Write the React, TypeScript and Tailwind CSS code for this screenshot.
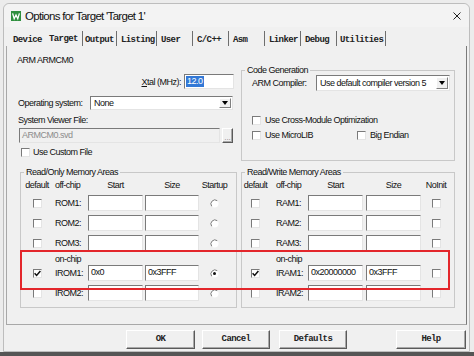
import React from "react";

const SANS = "font-['Liberation_Sans',Arial,sans-serif]";
const MONO = "font-['Liberation_Mono','DejaVu_Sans_Mono',monospace]";
const SUNKEN =
  "border-t border-l border-b border-r border-t-[#7a7a7a] border-l-[#7a7a7a] border-b-[#e4e4e4] border-r-[#e4e4e4]";
const RAISED =
  "border-t border-l border-b border-r border-t-white border-l-white border-b-[#5a5a5a] border-r-[#5a5a5a] shadow-[inset_-1px_-1px_0_#a8a8a8]";

function Check({ checked = false }: { checked?: boolean }) {
  return (
    <div className={`w-[9px] h-[9px] shrink-0 bg-white ${SUNKEN} flex items-center justify-center`}>
      {checked && (
        <svg width="7" height="7" viewBox="0 0 7 7">
          <path d="M0.6 3.2 L2.6 5.4 L6.4 0.9" fill="none" stroke="#111" strokeWidth="1.5" />
        </svg>
      )}
    </div>
  );
}

function Radio({ checked = false }: { checked?: boolean }) {
  return (
    <svg width="9" height="9" viewBox="0 0 9 9">
      <circle cx="4.5" cy="4.5" r="4" fill="#fff" />
      <path d="M1.7 7.3 A4 4 0 0 1 7.3 1.7" fill="none" stroke="#7a7a7a" strokeWidth="1" />
      {checked && <circle cx="4.5" cy="4.5" r="1.5" fill="#111" />}
    </svg>
  );
}

function Field({ value = "", className = "" }: { value?: string; className?: string }) {
  return (
    <div className={`bg-white ${SUNKEN} pl-[2px] pt-[1px] text-[9px] leading-[10px] text-[#111] ${className}`}>
      {value}
    </div>
  );
}

function Select({ value, className = "" }: { value: string; className?: string }) {
  return (
    <div className={`flex items-stretch bg-white ${SUNKEN} ${className}`}>
      <div className="flex-1 pl-[3px] flex items-center text-[9px] leading-[10px] text-[#111] overflow-hidden">{value}</div>
      <div className="w-[12px] m-[1px] bg-[#f0f0f0] border-t border-l border-b border-r border-t-white border-l-white border-b-[#808080] border-r-[#808080] flex items-center justify-center">
        <div className="w-0 h-0 border-l-[3px] border-r-[3px] border-t-[4px] border-l-transparent border-r-transparent border-t-black" />
      </div>
    </div>
  );
}

function Group({
  label,
  className = "",
  children,
}: {
  label: string;
  className?: string;
  children?: React.ReactNode;
}) {
  return (
    <div className={`relative border border-[#c8c8c8] ${className}`}>
      <span className="absolute -top-[6px] left-[3px] px-[2px] bg-[#f0f0f0] text-[9px] leading-[10px] text-[#111] whitespace-nowrap">
        {label}
      </span>
      {children}
    </div>
  );
}

function RomRow({
  label,
  start = "",
  size = "",
  checked = false,
  radio = false,
}: {
  label: string;
  start?: string;
  size?: string;
  checked?: boolean;
  radio?: boolean;
}) {
  return (
    <div className="flex h-[16px] items-center">
      <div className="w-[32px] flex justify-center">
        <Check checked={checked} />
      </div>
      <div className="w-[35px] pl-[2px] text-[9px] leading-[10px]">{label}</div>
      <Field value={start} className="w-[55px] h-[16px]" />
      <Field value={size} className="w-[54px] h-[16px] ml-[2px]" />
      <div className="w-[31px] flex justify-center">
        <Radio checked={radio} />
      </div>
    </div>
  );
}

function RamRow({
  label,
  start = "",
  size = "",
  checked = false,
}: {
  label: string;
  start?: string;
  size?: string;
  checked?: boolean;
}) {
  return (
    <div className="flex h-[16px] items-center">
      <div className="w-[27px] flex justify-center">
        <Check checked={checked} />
      </div>
      <div className="w-[39px] pl-[7px] text-[9px] leading-[10px]">{label}</div>
      <Field value={start} className="w-[55px] h-[16px]" />
      <Field value={size} className="w-[55px] h-[16px] ml-[3px]" />
      <div className="w-[30px] flex justify-center">
        <Check />
      </div>
    </div>
  );
}

const tabs: { name: string; cls: string }[] = [
  { name: "Device", cls: "w-[37px] pl-[4px] pt-[4px]" },
  { name: "Target", cls: "w-[37px] pl-[3px] pt-[2px] border-r border-r-[#6e6e6e]" },
  { name: "Output", cls: "w-[34px] pl-[2px] pt-[4px] border-r border-r-[#6e6e6e]" },
  { name: "Listing", cls: "w-[40px] pl-[4px] pt-[4px] border-r border-r-[#6e6e6e]" },
  { name: "User", cls: "w-[36px] pl-[4px] pt-[4px] border-r border-r-[#6e6e6e]" },
  { name: "C/C++", cls: "w-[36px] pl-[4px] pt-[4px] border-r border-r-[#6e6e6e]" },
  { name: "Asm", cls: "w-[36px] pl-[4px] pt-[4px] border-r border-r-[#6e6e6e]" },
  { name: "Linker", cls: "w-[36px] pl-[4px] pt-[4px] border-r border-r-[#6e6e6e]" },
  { name: "Debug", cls: "w-[36px] pl-[4px] pt-[4px] border-r border-r-[#6e6e6e]" },
  { name: "Utilities", cls: "w-[49px] pl-[3px] pt-[4px] border-r border-r-[#6e6e6e]" },
];

export default function App() {
  return (
    <div
      className={`relative w-[474px] h-[356px] overflow-hidden bg-[#ececec] flex flex-col ${SANS} text-[#111] tracking-[-0.5px] whitespace-nowrap`}
    >
      <div className="mt-[3px] ml-[3px] w-[467px] h-[349px] rounded-t-[6px] border border-[#bdbdbd] bg-[#f0f0f0] flex flex-col">
        {/* title bar */}
        <div className="h-[23px] flex items-center pl-[7px] pr-[8px] bg-[#f3f3f3] rounded-t-[6px]">
          <svg width="10" height="10" viewBox="0 0 10 10" className="shrink-0">
            <rect x="0" y="0" width="10" height="10" fill="#2f8f3e" />
            <path d="M1.6 2.4 L3.2 7.8 L5 4 L6.8 7.8 L8.4 2.4" fill="none" stroke="#fff" strokeWidth="1.3" />
          </svg>
          <span className="ml-[4px] text-[11.5px] leading-[12px] tracking-[-0.7px] text-[#111]">
            Options for Target 'Target 1'
          </span>
          <div className="flex-1" />
          <svg width="8" height="8" viewBox="0 0 8 8">
            <path d="M0.5 0.5 L7.5 7.5 M7.5 0.5 L0.5 7.5" stroke="#222" strokeWidth="1" />
          </svg>
        </div>
        {/* tabs */}
        <div
          className={`mt-[4px] h-[15px] flex items-stretch pl-[5px] ${MONO} text-[9px] font-bold tracking-[-0.6px] text-[#222]`}
        >
          {tabs.map((t) => (
            <div key={t.name} className={`flex items-center whitespace-nowrap ${t.cls}`}>
              {t.name}
            </div>
          ))}
        </div>
        {/* panel */}
        <div className="ml-[2px] w-[461px] h-[279px] border-l border-r border-b border-l-[#a8a8a8] border-r-[#7a7a7a] border-b-[#a8a8a8] flex flex-col pt-[9px]">
          <div className="flex items-start pl-[10px]">
            {/* left column */}
            <div className="w-[220px] flex flex-col text-[9px] leading-[10px]">
              <div className="h-[10px]">ARM ARMCM0</div>
              <div className="mt-[9px] h-[15px] flex items-center justify-end pr-[3px]">
                <span>
                  <span className="underline">X</span>tal (MHz):
                </span>
                <div className={`ml-[3px] w-[50px] h-[15px] bg-white ${SUNKEN} flex items-center pl-[1px]`}>
                  <span className="bg-[#3278d6] text-white leading-[11px] px-[1px]">12.0</span>
                </div>
              </div>
              <div className="mt-[7px] h-[14px] flex items-center">
                <div className="w-[73px] pl-[1px]">Operating system:</div>
                <Select value="None" className="w-[143px] h-[14px]" />
              </div>
              <div className="mt-[5px] h-[10px] pl-[1px]">System Viewer File:</div>
              <div className="mt-[3px] h-[15px] flex">
                <div
                  className={`ml-[2px] w-[201px] h-[15px] bg-[#f0f0f0] ${SUNKEN} pl-[2px] leading-[13px] text-[#8c8c8c]`}
                >
                  ARMCM0.svd
                </div>
                <div
                  className={`ml-[2px] w-[11px] h-[15px] bg-[#f0f0f0] ${RAISED} flex items-end justify-center text-[8px] leading-[9px] tracking-[0px] text-[#888]`}
                >
                  ...
                </div>
              </div>
              <div className="mt-[4px] h-[10px] flex items-center pl-[4px]">
                <Check />
                <span className="ml-[3px]">Use Custom File</span>
              </div>
            </div>
            {/* right column */}
            <Group label="Code Generation" className="ml-[4px] mt-[15px] w-[214px] h-[91px] text-[9px] leading-[10px]">
              <div className="mt-[4px] h-[16px] flex items-center pl-[10px]">
                <div className="w-[64px]">ARM Compiler:</div>
                <Select value="Use default compiler version 5" className="w-[134px] h-[16px]" />
              </div>
              <div className="mt-[24px] h-[10px] flex items-center pl-[10px]">
                <Check />
                <span className="ml-[4px]">Use Cross-Module Optimization</span>
              </div>
              <div className="mt-[5px] h-[10px] flex items-center pl-[10px]">
                <div className="w-[105px] flex items-center">
                  <Check />
                  <span className="ml-[4px]">Use MicroLIB</span>
                </div>
                <Check />
                <span className="ml-[4px]">Big Endian</span>
              </div>
            </Group>
          </div>
          {/* memory areas */}
          <div className="mt-[11px] flex pl-[13px] text-[9px] leading-[10px]">
            <Group label="Read/Only Memory Areas" className="w-[217px] h-[136px]">
              <div className="mt-[7px] h-[10px] flex items-center">
                <div className="w-[32px] text-center">default</div>
                <div className="w-[35px] pl-[2px]">off-chip</div>
                <div className="w-[55px] text-center">Start</div>
                <div className="w-[54px] ml-[2px] text-center">Size</div>
                <div className="w-[31px] text-center">Startup</div>
              </div>
              <div className="mt-[5px] flex flex-col gap-[4px]">
                <RomRow label="ROM1:" />
                <RomRow label="ROM2:" />
                <RomRow label="ROM3:" />
              </div>
              <div className="mt-[3px] h-[10px] pl-[34px]">on-chip</div>
              <div className="mt-[1px] flex flex-col gap-[4px]">
                <RomRow label="IROM1:" start="0x0" size="0x3FFF" checked radio />
                <RomRow label="IROM2:" />
              </div>
            </Group>
            <Group label="Read/Write Memory Areas" className="ml-[4px] w-[214px] h-[136px]">
              <div className="mt-[7px] h-[10px] flex items-center">
                <div className="w-[27px] text-center">default</div>
                <div className="w-[39px] pl-[7px]">off-chip</div>
                <div className="w-[55px] text-center">Start</div>
                <div className="w-[55px] ml-[3px] text-center">Size</div>
                <div className="w-[30px] text-center">NoInit</div>
              </div>
              <div className="mt-[5px] flex flex-col gap-[4px]">
                <RamRow label="RAM1:" />
                <RamRow label="RAM2:" />
                <RamRow label="RAM3:" />
              </div>
              <div className="mt-[3px] h-[10px] pl-[34px]">on-chip</div>
              <div className="mt-[1px] flex flex-col gap-[4px]">
                <RamRow label="IRAM1:" start="0x20000000" size="0x3FFF" checked />
                <RamRow label="IRAM2:" />
              </div>
            </Group>
          </div>
        </div>
        {/* buttons */}
        <div className={`mt-[5px] h-[19px] flex ${MONO} text-[9px] font-bold tracking-[-0.6px] text-[#222]`}>
          <div className={`ml-[122px] w-[69px] h-[19px] bg-[#f0f0f0] ${RAISED} flex items-center justify-center`}>OK</div>
          <div className={`ml-[7px] w-[68px] h-[19px] bg-[#f0f0f0] ${RAISED} flex items-center justify-center`}>Cancel</div>
          <div className={`ml-[9px] w-[68px] h-[19px] bg-[#f0f0f0] ${RAISED} flex items-center justify-center`}>Defaults</div>
          <div className={`ml-[49px] w-[70px] h-[19px] bg-[#f0f0f0] ${RAISED} flex items-center justify-center`}>Help</div>
        </div>
      </div>
      <div className="flex-1 bg-[#555555]" />
      {/* red annotation */}
      <div className="absolute left-[20px] top-[250px] w-[430px] h-[40px] border-2 border-[#e3262b] pointer-events-none" />
    </div>
  );
}
